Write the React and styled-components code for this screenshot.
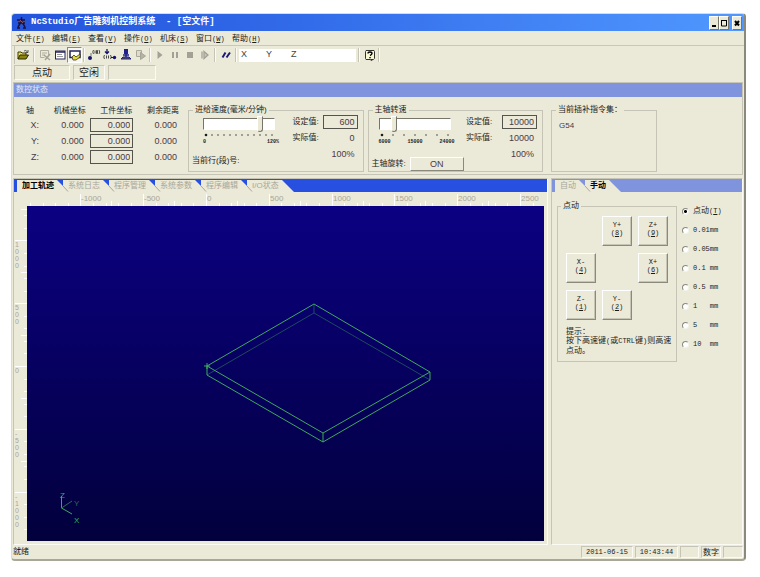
import * as React from "react";
import styled, { createGlobalStyle } from "styled-components";

const color = {
    face: "#ebe9d8",
    line: "#c6c4b4",
    light: "#fbfaf4",
    dark: "#8b897c",
    ink: "#1c1c18",
    value: "#4c3a44",
    muted: "#a9a798",
    activeBar: "#2850e0",
    idleBar: "#7f94dc",
    trace: "#3fa85c",
    traceDim: "#1d4a5c",
}

const cjk = '"Noto Sans CJK SC", sans-serif'
const mono = `"Liberation Mono", ${cjk}`
const sans = `"Liberation Sans", ${cjk}`

const GlobalStyle = createGlobalStyle`
    * {
        box-sizing: border-box;
    }
    body {
        margin: 0;
        background: #fff;
        color: ${color.ink};
        font: 8px/10px ${mono};
    }
    button, input, fieldset, legend {
        margin: 0;
        padding: 0;
        font: inherit;
        color: inherit;
    }
`

const Page = styled.div`
    display: flex;
    min-height: 100vh;
    padding: 13px 14px 17px 11px;
`

const Window = styled.main`
    display: flex;
    flex: 1;
    flex-direction: column;
    min-width: 0;
    overflow: hidden;
    border: 1px solid #dddccf;
    border-right: 2px solid ${color.dark};
    border-bottom: 2px solid #a9a798;
    border-radius: 4px;
    background: ${color.face};
`

const TitleBar = styled.header`
    display: flex;
    align-items: center;
    height: 17px;
    padding: 0 2px 0 4px;
    background: linear-gradient(90deg, #2453dc, #3068e8 35%, #5098ff);
`

const Title = styled.h1`
    flex: 1;
    margin: 0 0 0 4px;
    color: #fff;
    font: bold 9px/17px ${mono};
    white-space: pre;
`

const WindowButton = styled.button`
    display: flex;
    width: 10px;
    height: 14px;
    margin-left: ${p => p.$apart ? "3px" : "0"};
    border: 1px solid;
    border-color: #fff #77756a #77756a #fff;
    background: ${color.face};
`

const MenuBar = styled.nav`
    display: flex;
    gap: 7px;
    height: 15px;
    padding: 3px 4px 0;
    border-bottom: 1px solid #c4c8be;
`

const MenuItem = styled.button`
    width: 29px;
    height: 10px;
    border: 0;
    background: none;
    text-align: left;
    white-space: nowrap;
`

const En = styled.span`
    font-size: 7px;
`

const ToolBar = styled.div`
    display: flex;
    align-items: center;
    height: 18px;
    margin-left: 2px;
    border-left: 1px solid ${color.line};
`

const ToolButton = styled.button`
    display: flex;
    align-items: center;
    justify-content: center;
    width: ${p => p.$wide ? "16px" : "15px"};
    height: 16px;
    border: 1px solid transparent;
    border-color: ${p => p.$pressed ? `${color.dark} #fff #fff ${color.dark}` : "transparent"};
    background: ${p => p.$pressed ? "#f6f5ee" : "none"};
`

const Divider = styled.span`
    width: 2px;
    height: 14px;
    margin: 0 ${p => p.$tight ? "1px" : "2px"};
    border-left: 1px solid ${color.line};
    border-right: 1px solid ${color.light};
`

const AxisReadout = styled.div`
    display: grid;
    grid-template-columns: 25px 25px 1fr;
    width: 117px;
    height: 13px;
    padding-left: 2px;
    background: #fff;
    color: #444;
    font: 9px/11px ${sans};
`

const ModeBar = styled.div`
    display: flex;
    gap: 3px;
    height: 18px;
    padding: 1px 2px 2px;
`

const ModeCell = styled.span`
    width: ${p => p.$width}px;
    border: 1px solid;
    border-color: ${color.line} ${color.light} ${color.light} ${color.line};
    font-size: 10px;
    line-height: 15px;
    text-align: center;
`

const StatusPanel = styled.section`
    margin: 0 1px 3px;
    border: 1px solid ${color.line};
`

const PanelTitle = styled.h2`
    height: 14px;
    margin: 0;
    padding-left: 2px;
    background: ${color.idleBar};
    color: #e4e8f6;
    font: 8px/14px ${mono};
`

const StatusBody = styled.div`
    display: grid;
    grid-template-columns: 166px 1fr 1fr 195px;
    column-gap: 4px;
    height: 77px;
    padding: 8px 0 2px 4px;
    font-family: ${sans};
`

const CoordTable = styled.table`
    align-self: start;
    width: 162px;
    border-collapse: collapse;
    table-layout: fixed;

    th {
        padding: 0 1px 0 0;
        font-weight: normal;
        text-align: right;
        white-space: nowrap;
    }
    thead th {
        height: 12px;
    }
    td {
        height: 16px;
        padding: 0 3px 0 0;
        color: ${color.value};
        font-size: 9px;
        text-align: right;
    }
    tbody th {
        color: ${color.value};
        font-size: 9px;
    }
    th:first-child {
        width: 22px;
    }
    thead th:first-child {
        padding-right: 6px;
    }
    td:nth-child(3) {
        padding: 0;
    }
`

const ValueBox = styled.input`
    display: block;
    width: ${p => p.$width}px;
    height: 14px;
    margin-left: auto;
    padding-right: 2px;
    border: 1px solid #55544c;
    background: none;
    color: ${color.value};
    font: 9px/12px ${sans};
    text-align: right;
`

const Group = styled.fieldset`
    display: flex;
    min-width: 0;
    border: 1px solid ${color.line};
`

const Legend = styled.legend`
    margin-left: 4px;
    padding: 0 2px;
    line-height: 10px;
    white-space: nowrap;
`

const GroupBody = styled.div`
    display: flex;
    justify-content: space-between;
    width: 100%;
    height: 56px;
    padding-right: 5px;
`

const SliderColumn = styled.div`
    display: flex;
    flex-direction: column;
    justify-content: space-between;
    padding-left: 3px;
`

const SliderBlock = styled.div`
    width: 76px;
    margin-left: ${p => p.$indent}px;
    padding-top: 3px;
`

const Slider = styled.input`
    display: block;
    appearance: none;
    width: 72px;
    height: 12px;
    border: 1px solid;
    border-color: #77756a #fff #fff #77756a;
    background: #fff;

    &::-webkit-slider-thumb {
        appearance: none;
        width: 6px;
        height: 16px;
        border: 1px solid;
        border-color: #fff #77756a #77756a #fff;
        border-radius: 0 0 3px 3px;
        background: ${color.face};
    }
`

const Scale = styled.svg`
    display: block;
    width: 72px;
    height: 7px;
`

const ScaleLabels = styled.div`
    display: flex;
    justify-content: space-between;
    font: bold 5px/10px ${mono};
`

const Caption = styled.div`
    display: flex;
    align-items: ${p => p.$top ? "flex-start" : "center"};
    gap: 4px;
    height: 15px;
    white-space: nowrap;
`

const OnButton = styled.button`
    width: 54px;
    height: 14px;
    border: 1px solid;
    border-color: #fff ${color.dark} ${color.dark} #fff;
    background: ${color.face};
    color: ${color.value};
    font-size: 9px;
    line-height: 12px;
`

const Readings = styled.div`
    display: grid;
    grid-template-columns: 27px 35px;
    grid-template-rows: repeat(3, 14px);
    column-gap: ${p => p.$gap}px;
    row-gap: 2px;
    align-items: center;
    white-space: nowrap;
`

const Reading = styled.output`
    grid-column: 2;
    padding-right: 3px;
    color: ${color.value};
    font-size: 9px;
    line-height: 12px;
    text-align: right;
`

const CodeSlot = styled.div`
    display: flex;
    padding-left: 4px;
`

const CodeGroup = styled(Group)`
    width: 106px;
    padding: 5px 7px;
    color: ${color.value};
    line-height: 12px;

    legend {
        margin-left: -3px;
        color: ${color.ink};
    }
`

const Workspace = styled.div`
    display: grid;
    flex: 1;
    grid-template-columns: 1fr 192px;
    gap: 3px;
    min-height: 0;
    margin: 0 1px;
`

const Panel = styled.section`
    display: flex;
    flex-direction: column;
    min-width: 0;
    border: 1px solid ${color.line};
    border-right-color: ${color.light};
    border-bottom-color: ${color.light};
`

const TabBar = styled.div`
    display: flex;
    height: 13px;
    padding: 1px 0 0 3px;
    background: ${p => p.$bar};
`

const Tab = styled.button`
    flex: none;
    height: 12px;
    padding: 0 3px 0 5px;
    border: 0;
    background: ${color.face};
    color: ${p => p.$active ? "#000" : color.muted};
    font-family: ${sans};
    font-weight: ${p => p.$active ? "bold" : "normal"};
    line-height: 12px;
    white-space: nowrap;
`

const Slant = styled.svg`
    flex: none;
    width: ${p => p.$last ? "12px" : "6px"};
    height: 12px;
    overflow: visible;
    background: ${color.face};
    z-index: 1;
`

const Viewport = styled.div`
    display: grid;
    flex: 1;
    grid-template-columns: 13px 1fr;
    grid-template-rows: 14px 1fr;
    padding: 0 3px 3px 0;
`

const TopRuler = styled.svg`
    grid-column: 1 / 3;
    width: 100%;
    height: 14px;
`

const SideRuler = styled.svg`
    width: 13px;
    height: 100%;
`

const RulerText = styled.text`
    fill: ${color.muted};
    font: ${p => p.$small ? "7px" : "8px"} ${sans};
`

const Scene = styled.svg`
    width: 100%;
    height: 100%;
    background: linear-gradient(#0c0082, #070062 45%, #02003c);
`

const AxisText = styled.text`
    font: 8px ${sans};
`

const ManualBody = styled.div`
    display: flex;
    gap: 5px;
    align-items: flex-start;
    padding: 9px 3px 0 5px;
`

const JogGroup = styled(Group)`
    flex: 1;
    flex-direction: column;
    padding: 5px 0 6px 8px;

    legend {
        margin-left: -5px;
    }
`

const JogPad = styled.div`
    display: grid;
    grid-template-columns: repeat(3, 30px);
    grid-template-rows: repeat(3, 30px);
    gap: 7px 6px;
`

const JogButton = styled.button`
    grid-area: ${p => p.$row} / ${p => p.$col};
    padding-bottom: 5px;
    border: 1px solid;
    border-color: #fff ${color.dark} ${color.dark} #fff;
    background: ${color.face};
    box-shadow: inset -1px -1px ${color.line};
    font-size: 7px;
    line-height: 8px;
`

const Hint = styled.p`
    margin: 7px 0 0;
    line-height: 9px;
    white-space: nowrap;
`

const StepList = styled.div`
    display: flex;
    flex-direction: column;
    gap: 9px;
    width: 57px;
    padding-top: 5px;
`

const Step = styled.label`
    display: flex;
    align-items: center;
    gap: 4px;
    height: 10px;
    font-size: ${p => p.$cjk ? "8px" : "7px"};
    white-space: pre;
`

const Radio = styled.input`
    appearance: none;
    width: 7px;
    height: 7px;
    border: 1px solid;
    border-color: ${color.dark} #f4f3ea #f4f3ea ${color.dark};
    border-radius: 50%;
    background: #fff;

    &:checked {
        background: radial-gradient(#000 1px, #fff 2px);
    }
`

const StatusBar = styled.footer`
    display: flex;
    align-items: center;
    gap: 2px;
    height: 14px;
    padding: 0 1px;
`

const StatusText = styled.span`
    flex: 1;
`

const StatusCell = styled.span`
    width: ${p => p.$width}px;
    height: 12px;
    border: 1px solid;
    border-color: ${color.line} ${color.light} ${color.light} ${color.line};
    font-size: ${p => p.$cjk ? "8px" : "7px"};
    line-height: 11px;
    text-align: center;
    white-space: nowrap;
`

const Icon = ({ children, size = 12 }) => (
    <svg width={size} height="12" viewBox={`0 0 ${size} 12`} fill="none" aria-hidden="true">{children}</svg>
)

const FolderIcon = () => (
    <Icon>
        <path d="M1 10V3h3l1 1h4v2" fill="#e8dc50" stroke="#3a3808" />
        <path d="M1 10l2-4h8.500L9 10z" fill="#8a8410" stroke="#2c2a04" />
        <path d="M7 2q2-1.500 3.500 1M11 1v2.500H8.500" stroke="#333" strokeWidth=".8" />
    </Icon>
)

const NoDocIcon = () => (
    <Icon>
        <path d="M1.500 1.500h8v6M1.500 1.500v7h4M3 4h5M3 6h3" stroke="#b0ae9f" />
        <path d="M5 6l6 5M11 5l-5 6" stroke="#a5a396" strokeWidth="1.500" />
    </Icon>
)

const FormIcon = () => (
    <Icon>
        <rect x="1.500" y="2" width="9.500" height="8" fill="#fff" stroke="#24245c" />
        <path d="M1.500 3h9.500" stroke="#24245c" strokeWidth="1.500" />
        <path d="M3 5.500h5M3 7.500h6" stroke="#999" />
    </Icon>
)

const EditFormIcon = () => (
    <Icon>
        <rect x="1" y="2" width="10" height="6.500" fill="#fff" stroke="#24245c" strokeWidth="1.500" />
        <path d="M3 8l2-2 2 2 4-3v3L7 11H4z" fill="#e0d840" stroke="#3c3a10" strokeWidth=".8" />
    </Icon>
)

const OriginIcon = () => (
    <Icon size={14}>
        <circle cx="3" cy="9" r="2" fill="#14146c" />
        <path d="M4 7V4" stroke="#777" />
        <path d="M6.500 1q-1.500 2 0 4M12 1q1.500 2 0 4M8 1.500v3M9.500 1.500h1v3h-1z" stroke="#222" strokeWidth=".8" />
    </Icon>
)

const ReturnIcon = () => (
    <Icon size={14}>
        <path d="M4 0v4M2 2.500l2 2 2-2" stroke="#14146c" strokeWidth="1.300" />
        <path d="M1.500 6q-1.500 2 0 4M7.500 6q1.500 2 0 4M3.500 6.500v3M5.500 6.500v3" stroke="#222" strokeWidth=".8" />
        <circle cx="11.500" cy="8.500" r="1.700" fill="#14146c" />
        <path d="M8 8.500h3" stroke="#14146c" />
    </Icon>
)

const SpindleIcon = () => (
    <Icon>
        <path d="M4 0h4v5H4z" fill="#20208c" />
        <path d="M6 5v3M3 6h6" stroke="#20208c" strokeWidth="1.500" />
        <path d="M1 10l2-2h6l2 2z" fill="#55534c" stroke="#20208c" />
    </Icon>
)

const HandRunIcon = () => (
    <Icon>
        <path d="M1.500 1.500h5v6h-5z" fill="#dddbcc" stroke="#aaa899" />
        <path d="M5.500 3.500v7l5-3.500z" fill="#b5b3a5" stroke="#a5a396" />
    </Icon>
)

const PlayIcon = () => <Icon><path d="M3.500 2v8l5-4z" fill="#a3a195" /></Icon>
const PauseIcon = () => <Icon><path d="M3 3h2v6H3zM7 3h2v6H7z" fill="#a3a195" /></Icon>
const StopIcon = () => <Icon><path d="M3 3h6v6H3z" fill="#a3a195" /></Icon>
const ResumeIcon = () => (
    <Icon>
        <path d="M3 2.500v7M5 2.500l4 3.500-4 3.500z" fill="#c5c3b5" stroke="#a3a195" strokeWidth="1.300" />
    </Icon>
)
const SlashIcon = () => (
    <Icon>
        <path d="M2.500 8.500l3-5M6.500 8.500l3.500-5" stroke="#1c1c78" strokeWidth="2" />
    </Icon>
)

const HelpIcon = () => (
    <Icon>
        <path d="M2 1.500h8l.5 1v7l-1 1H7l1 1-2-1H2l-.5-1v-7z" fill="#f8f7d8" stroke="#33322c" />
        <path d="M4 4.500q0-1.500 2-1.500t2 1.500q0 1-2 2M6 8v1.200" stroke="#000" strokeWidth="1.400" />
    </Icon>
)

const AppIcon = () => (
    <svg width="11" height="12" viewBox="0 0 11 12" fill="none" aria-hidden="true">
        <path d="M1 3h8M5.500 0v5M2 6h7M5 5l-3 5M6 5l3 5M1 11h3M7 11h3" stroke="#1c1238" strokeWidth="1.500" />
        <path d="M4 3l3 3" stroke="#8a5468" />
    </svg>
)

const menus = [
    ["文件", "F"], ["编辑", "E"], ["查看", "V"], ["操作", "O"],
    ["机床", "S"], ["窗口", "W"], ["帮助", "H"],
]

const axes = ["X", "Y", "Z"]

const traceTabs = ["加工轨迹", "系统日志", "程序管理", "系统参数", "程序编辑", "I/O状态"]

const jogKeys = [
    { name: "Y+", num: "8", row: 1, col: 2 },
    { name: "Z+", num: "9", row: 1, col: 3 },
    { name: "X-", num: "4", row: 2, col: 1 },
    { name: "X+", num: "6", row: 2, col: 3 },
    { name: "Z-", num: "1", row: 3, col: 1 },
    { name: "Y-", num: "2", row: 3, col: 2 },
]

const steps = ["0.01mm", "0.05mm", "0.1 mm", "0.5 mm", "1   mm", "5   mm", "10  mm"]

const Tabs = ({ names, active, bar }) => (
    <TabBar role="tablist" $bar={bar}>
        {names.map((name, i) => {
            const last = i === names.length - 1
            return (
                <React.Fragment key={name}>
                    <Tab role="tab" aria-selected={name === active} $active={name === active}>{name}</Tab>
                    <Slant $last={last} aria-hidden="true">
                        <path d={last ? "M0 0H12V12z" : "M0 0H6V6z"} fill={bar} />
                        {!last && <path d="M6 6l5 5.500" stroke="#a9a798" />}
                    </Slant>
                </React.Fragment>
            )
        })}
    </TabBar>
)

// 100 units per small tick, 500 per labelled one
const unit = 12.56

const HorizontalRuler = () => (
    <TopRuler aria-hidden="true">
        {Array.from({ length: 42 }, (_, i) => i - 14).map(n => {
            const x = Math.round(192 + n * unit)
            const major = n % 5 === 0
            return (
                <React.Fragment key={n}>
                    <path d={`M${x + 0.5} ${major ? 2 : 11}V14`} stroke="#fff" />
                    {major && n >= -10 && <RulerText x={x + 1} y="9">{n * 100}</RulerText>}
                    {major && <path d={`M${Math.round(x + unit * 2.5) + 0.5} 9V14`} stroke="#fff" />}
                </React.Fragment>
            )
        })}
    </TopRuler>
)

const VerticalRuler = () => (
    <SideRuler aria-hidden="true">
        {Array.from({ length: 27 }, (_, i) => i - 14).map(n => {
            const y = Math.round(160 - n * unit)
            const major = n % 5 === 0
            return (
                <React.Fragment key={n}>
                    <path d={`M${major ? 1 : 10} ${y + 0.5}H13`} stroke="#fff" />
                    {major && <path d={`M7 ${Math.round(y - unit * 2.5) + 0.5}H13`} stroke="#fff" />}
                    {major && String(n * 100).split("").map((ch, k) => (
                        <RulerText key={k} $small x="1" y={y + 7 + k * 7}>{ch}</RulerText>
                    ))}
                </React.Fragment>
            )
        })}
    </SideRuler>
)

const TraceScene = () => (
    <Scene viewBox="0 0 517 335" preserveAspectRatio="xMinYMin meet" fill="none">
        <path d="M180 169L287 107L403 174M287 98V107" stroke={color.traceDim} />
        <path d="M180 160L287 98L403 166L296 227z" stroke={color.trace} />
        <path d="M180 160V169L296 236L403 174V166M296 227V236" stroke={color.trace} />
        <path d="M177 160h6M180 157v6" stroke={color.trace} />
        <path d="M34.500 290V302L45 308" stroke={color.trace} />
        <path d="M34.500 302L45 295" stroke="#2a6c50" />
        <AxisText x="33" y="292" fill={color.trace}>Z</AxisText>
        <AxisText x="47" y="300" fill="#2a6c50">Y</AxisText>
        <AxisText x="47" y="317" fill={color.trace}>X</AxisText>
    </Scene>
)

const Coordinates = () => (
    <CoordTable>
        <thead>
            <tr>
                <th scope="col">轴</th>
                <th scope="col">机械坐标</th>
                <th scope="col">工件坐标</th>
                <th scope="col">剩余距离</th>
            </tr>
        </thead>
        <tbody>
            {axes.map(axis => (
                <tr key={axis}>
                    <th scope="row">{axis}:</th>
                    <td>0.000</td>
                    <td><ValueBox $width={43} aria-label={`工件坐标 ${axis}`} defaultValue="0.000" /></td>
                    <td>0.000</td>
                </tr>
            ))}
        </tbody>
    </CoordTable>
)

const Override = ({ id, title, value, actual, gap, indent, position, dots, labels, caption, children, top }) => (
    <Group>
        <Legend>{title}</Legend>
        <GroupBody>
            <SliderColumn>
                <SliderBlock $indent={indent}>
                    <Slider type="range" min="0" max="100" defaultValue={position} aria-label={title} />
                    <Scale aria-hidden="true">
                        {Array.from({ length: dots }, (_, i) => (
                            <circle key={i} cx={3 + i * (66 / (dots - 1))} cy="5" r={i === 0 ? 1.3 : 0.7} fill={color.ink} />
                        ))}
                    </Scale>
                    <ScaleLabels>{labels.map(l => <span key={l}>{l}</span>)}</ScaleLabels>
                </SliderBlock>
                <Caption $top={top}>{caption}{children}</Caption>
            </SliderColumn>
            <Readings $gap={gap}>
                <label htmlFor={id}>设定值:</label>
                <ValueBox id={id} $width={35} defaultValue={value} />
                <span>实际值:</span>
                <Reading>{actual}</Reading>
                <Reading>100%</Reading>
            </Readings>
        </GroupBody>
    </Group>
)

const App = () => (
    <Page>
        <GlobalStyle />
        <Window>
            <TitleBar>
                <AppIcon />
                <Title>NcStudio广告雕刻机控制系统  - [空文件]</Title>
                <WindowButton aria-label="最小化">
                    <svg width="8" height="12"><path d="M2 9h4" stroke="#000" strokeWidth="2" /></svg>
                </WindowButton>
                <WindowButton aria-label="最大化">
                    <svg width="8" height="12"><path d="M1 3.500h6M1.500 3v6h5V3" fill="none" stroke="#000" /></svg>
                </WindowButton>
                <WindowButton $apart aria-label="关闭">
                    <svg width="8" height="12"><path d="M2 4l4 4.500M6 4l-4 4.500" stroke="#000" strokeWidth="2" /></svg>
                </WindowButton>
            </TitleBar>
            <MenuBar>
                {menus.map(([name, key]) => (
                    <MenuItem key={key}>{name}<En>(<u>{key}</u>)</En></MenuItem>
                ))}
            </MenuBar>
            <ToolBar>
                <ToolButton $wide aria-label="打开"><FolderIcon /></ToolButton>
                <Divider />
                <ToolButton aria-label="关闭文件"><NoDocIcon /></ToolButton>
                <ToolButton aria-label="查看窗口"><FormIcon /></ToolButton>
                <ToolButton $pressed aria-label="编辑窗口"><EditFormIcon /></ToolButton>
                <Divider $tight />
                <ToolButton $wide aria-label="设为原点"><OriginIcon /></ToolButton>
                <ToolButton $wide aria-label="回原点"><ReturnIcon /></ToolButton>
                <ToolButton aria-label="对刀"><SpindleIcon /></ToolButton>
                <ToolButton aria-label="手轮"><HandRunIcon /></ToolButton>
                <Divider $tight />
                <ToolButton aria-label="开始"><PlayIcon /></ToolButton>
                <ToolButton aria-label="暂停"><PauseIcon /></ToolButton>
                <ToolButton aria-label="停止"><StopIcon /></ToolButton>
                <ToolButton aria-label="继续"><ResumeIcon /></ToolButton>
                <Divider />
                <ToolButton aria-label="清除轨迹"><SlashIcon /></ToolButton>
                <Divider />
                <AxisReadout>{axes.map(a => <span key={a}>{a}</span>)}</AxisReadout>
                <Divider />
                <ToolButton aria-label="帮助"><HelpIcon /></ToolButton>
                <Divider $tight />
            </ToolBar>
            <ModeBar>
                <ModeCell $width={56}>点动</ModeCell>
                <ModeCell $width={32}>空闲</ModeCell>
                <ModeCell $width={48} />
            </ModeBar>
            <StatusPanel>
                <PanelTitle>数控状态</PanelTitle>
                <StatusBody>
                    <Coordinates />
                    <Override
                        id="feed"
                        title="进给速度(毫米/分钟)"
                        value="600"
                        actual="0"
                        gap={3}
                        indent={11}
                        position={83}
                        dots={12}
                        labels={["0", "120%"]}
                        caption="当前行(段)号:"
                        top
                    />
                    <Override
                        id="spindle"
                        title="主轴转速"
                        value="10000"
                        actual="10000"
                        gap={9}
                        indent={7}
                        position={18}
                        dots={7}
                        labels={["6000", "15000", "24000"]}
                        caption="主轴旋转:"
                    >
                        <OnButton>ON</OnButton>
                    </Override>
                    <CodeSlot>
                        <CodeGroup>
                            <Legend>当前插补指令集：</Legend>
                            G54
                        </CodeGroup>
                    </CodeSlot>
                </StatusBody>
            </StatusPanel>
            <Workspace>
                <Panel>
                    <Tabs names={traceTabs} active="加工轨迹" bar={color.activeBar} />
                    <Viewport>
                        <HorizontalRuler />
                        <VerticalRuler />
                        <TraceScene />
                    </Viewport>
                </Panel>
                <Panel>
                    <Tabs names={["自动", "手动"]} active="手动" bar={color.idleBar} />
                    <ManualBody>
                        <JogGroup>
                            <Legend>点动</Legend>
                            <JogPad>
                                {jogKeys.map(k => (
                                    <JogButton key={k.num} $row={k.row} $col={k.col}>
                                        {k.name}<br />(<u>{k.num}</u>)
                                    </JogButton>
                                ))}
                            </JogPad>
                            <Hint>
                                提示：<br />
                                按下高速键<En>(</En>或<En>CTRL</En>键<En>)</En>则高速<br />
                                点动。
                            </Hint>
                        </JogGroup>
                        <StepList role="radiogroup">
                            <Step $cjk>
                                <Radio type="radio" name="step" defaultChecked />
                                <span>点动<En>(<u>T</u>)</En></span>
                            </Step>
                            {steps.map(s => (
                                <Step key={s}><Radio type="radio" name="step" />{s}</Step>
                            ))}
                        </StepList>
                    </ManualBody>
                </Panel>
            </Workspace>
            <StatusBar>
                <StatusText>就绪</StatusText>
                <StatusCell $width={52}>2011-06-15</StatusCell>
                <StatusCell $width={43}>10:43:44</StatusCell>
                <StatusCell $width={19} />
                <StatusCell $width={20} $cjk>数字</StatusCell>
                <StatusCell $width={20} />
            </StatusBar>
        </Window>
    </Page>
)

export default App
